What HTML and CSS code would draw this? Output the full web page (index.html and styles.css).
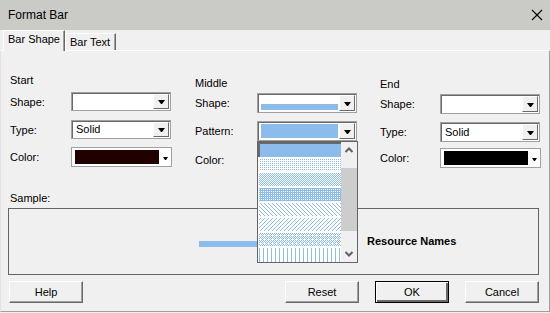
FILE: index.html
```html
<!DOCTYPE html>
<html>
<head>
<meta charset="utf-8">
<link rel="stylesheet" href="styles.css">
</head>
<body>
<div class="dialog">
  <div class="titlebar">
    <span class="title">Format Bar</span>
    <svg class="close" width="12" height="12" viewBox="0 0 12 12"><path d="M1 1 L11 11 M11 1 L1 11" stroke="#000" stroke-width="1.1" fill="none"/></svg>
  </div>
  <div class="tabs">
    <div class="tab active">Bar Shape</div>
    <div class="tab">Bar Text</div>
  </div>
  <div class="panel">
    <div class="groups">
      <div class="group g-start">
        <div class="heading">Start</div>
        <div class="row r1"><span class="lbl">Shape:</span><div class="combo"><div class="val"></div><div class="btn"><i class="arrow"></i></div></div></div>
        <div class="row r2"><span class="lbl">Type:</span><div class="combo"><div class="val">Solid</div><div class="btn"><i class="arrow"></i></div></div></div>
        <div class="row r3"><span class="lbl">Color:</span><div class="ccombo"><div class="swatch dark-red"></div><i class="sarrow"></i></div></div>
      </div>
      <div class="group g-mid">
        <div class="heading">Middle</div>
        <div class="row r1"><span class="lbl">Shape:</span><div class="combo"><div class="val shapeval"><div class="shapebar"></div></div><div class="btn"><i class="arrow"></i></div></div></div>
        <div class="row r2"><span class="lbl">Pattern:</span><div class="combo"><div class="val patval"><div class="patfill"></div></div><div class="btn"><i class="arrow"></i></div></div></div>
        <div class="row r3"><span class="lbl">Color:</span></div>
      </div>
      <div class="group g-end">
        <div class="heading">End</div>
        <div class="row r1"><span class="lbl">Shape:</span><div class="combo"><div class="val"></div><div class="btn"><i class="arrow"></i></div></div></div>
        <div class="row r2"><span class="lbl">Type:</span><div class="combo"><div class="val">Solid</div><div class="btn"><i class="arrow"></i></div></div></div>
        <div class="row r3"><span class="lbl">Color:</span><div class="ccombo"><div class="swatch black"></div><i class="sarrow"></i></div></div>
      </div>
    </div>
    <div class="sample-label">Sample:</div>
    <div class="sample">
      <div class="sbar"></div>
      <div class="resname">Resource Names</div>
    </div>
    <div class="buttons">
      <div class="button help">Help</div>
      <div class="spacer"></div>
      <div class="button">Reset</div>
      <div class="button default">OK</div>
      <div class="button">Cancel</div>
    </div>

    <div class="dropdown">
      <div class="items">
        <div class="item selected"></div>
        <svg class="patterns" width="83" height="105" viewBox="0 0 83 105" shape-rendering="crispEdges">
          <defs>
            <pattern id="p25" width="2" height="2" patternUnits="userSpaceOnUse"><rect x="0" y="0" width="1" height="1" fill="#8cbcec"/></pattern>
            <pattern id="p50" width="2" height="2" patternUnits="userSpaceOnUse"><rect x="0" y="0" width="1" height="1" fill="#8cbcec"/><rect x="1" y="1" width="1" height="1" fill="#8cbcec"/></pattern>
            <pattern id="p75" width="2" height="2" patternUnits="userSpaceOnUse"><rect x="0" y="0" width="2" height="2" fill="#8cbcec"/><rect x="1" y="0" width="1" height="1" fill="#fff"/></pattern>
            <pattern id="pback" width="4" height="4" patternUnits="userSpaceOnUse"><rect x="0" y="0" width="1" height="1" fill="#8cbcec"/><rect x="1" y="1" width="1" height="1" fill="#8cbcec"/><rect x="2" y="2" width="1" height="1" fill="#8cbcec"/><rect x="3" y="3" width="1" height="1" fill="#8cbcec"/></pattern>
            <pattern id="pfwd" width="4" height="4" patternUnits="userSpaceOnUse"><rect x="3" y="0" width="1" height="1" fill="#8cbcec"/><rect x="2" y="1" width="1" height="1" fill="#8cbcec"/><rect x="1" y="2" width="1" height="1" fill="#8cbcec"/><rect x="0" y="3" width="1" height="1" fill="#8cbcec"/></pattern>
            <pattern id="pcross" width="4" height="4" patternUnits="userSpaceOnUse"><rect x="0" y="0" width="1" height="1" fill="#8cbcec"/><rect x="2" y="0" width="1" height="1" fill="#8cbcec"/><rect x="1" y="1" width="1" height="1" fill="#8cbcec"/><rect x="3" y="1" width="1" height="1" fill="#8cbcec"/><rect x="0" y="2" width="1" height="1" fill="#8cbcec"/><rect x="3" y="3" width="1" height="1" fill="#8cbcec"/><rect x="1" y="3" width="1" height="1" fill="#8cbcec"/></pattern>
            <pattern id="pvert" width="4" height="4" patternUnits="userSpaceOnUse"><rect x="1" y="0" width="1" height="4" fill="#8cbcec"/></pattern>
          </defs>
          <rect x="1" y="1" width="82" height="13" fill="url(#p25)"/>
          <rect x="1" y="16" width="82" height="13" fill="url(#p50)"/>
          <rect x="1" y="31" width="82" height="13" fill="url(#p75)"/>
          <rect x="1" y="46" width="82" height="13" fill="url(#pback)"/>
          <rect x="1" y="61" width="82" height="13" fill="url(#pfwd)"/>
          <rect x="1" y="76" width="82" height="13" fill="url(#pcross)"/>
          <rect x="1" y="91" width="82" height="14" fill="url(#pvert)"/>
        </svg>
      </div>
      <div class="scrollbar">
        <svg class="chev" width="16" height="16" viewBox="0 0 16 16"><path d="M4.5 10 L8 6.5 L11.5 10" stroke="#606060" stroke-width="2" fill="none"/></svg>
        <div class="track"><div class="thumb"></div></div>
        <svg class="chev" width="16" height="16" viewBox="0 0 16 16"><path d="M4.5 6 L8 9.5 L11.5 6" stroke="#606060" stroke-width="2" fill="none"/></svg>
      </div>
    </div>
  </div>
</div>
</body>
</html>
```

FILE: styles.css
```css
html, body {
  margin: 0;
  padding: 0;
  background: #f0f0f0;
}
body {
  font-family: "Liberation Sans", Arial, sans-serif;
  font-size: 11px;
  color: #000;
}
.dialog {
  width: 550px;
  height: 313px;
  background: #f0f0f0;
  overflow: hidden;
}
.titlebar {
  height: 30px;
  background: #cacac6;
  display: flex;
  align-items: center;
  justify-content: space-between;
  padding: 0 7px 1px 8px;
  box-sizing: border-box;
}
.title {
  font-size: 12px;
  line-height: 14px;
}
.close {
  display: block;
  margin-right: 0;
}
.tabs {
  height: 20px;
  display: flex;
  align-items: flex-end;
  padding-left: 3px;
  position: relative;
  z-index: 2;
}
.tab {
  box-sizing: border-box;
  height: 17px;
  padding: 0 0 0 4px;
  line-height: 16px;
  border-top: 1px solid #fff;
  border-left: 1px solid #fff;
  border-right: 1px solid #696969;
  box-shadow: inset -1px 0 #a0a0a0;
  width: 51px;
  margin-bottom: 0;
}
.tab.active {
  width: 62px;
  height: 21px;
  margin-bottom: -1px;
  line-height: 17px;
  padding-bottom: 2px;
  background: #f0f0f0;
  border-right: 1px solid #696969;
}
.panel {
  position: relative;
  height: 262px;
  box-sizing: border-box;
  border-top: 1px solid #fff;
  border-left: 1px solid #e3e3e3;
  border-right: 1px solid #a0a0a0;
  border-bottom: 1px solid #a0a0a0;
}
.groups {
  height: 119px;
  display: flex;
  padding-left: 9px;
}
.group {
  width: 185px;
  flex: none;
}
.heading {
  line-height: 13px;
  height: 13px;
}
.row {
  display: flex;
  align-items: center;
  height: 19px;
}
.lbl {
  width: 61px;
  flex: none;
}
.g-start { padding-top: 23px; }
.g-start .r1 { margin-top: 5px; }
.g-start .r2 { margin-top: 9px; }
.g-start .r3 { margin-top: 8px; height: 20px; }

.g-mid { padding-top: 26px; }
.g-mid .lbl { width: 62px; }
.g-mid .r1 { margin-top: 3px; height: 20px; }
.g-mid .r2 { margin-top: 8px; height: 20px; }
.g-mid .r3 { margin-top: 9px; }

.g-end { padding-top: 27px; }
.g-end .lbl { width: 60px; }
.g-end .r1 { margin-top: 3px; height: 20px; }
.g-end .r2 { margin-top: 8px; height: 20px; }
.g-end .r3 { margin-top: 6px; height: 20px; }

.combo {
  width: 100px;
  height: 100%;
  box-sizing: border-box;
  border: 1px solid #a0a0a0;
  box-shadow: inset 1px 1px #696969;
  background: #fff;
  display: flex;
  padding: 1px 1px 1px 2px;
}
.val {
  flex: 1;
  display: flex;
  align-items: center;
  padding-left: 2px;
  line-height: 13px;
}
.shapeval {
  align-items: flex-end;
  padding: 0 1px 1px 1px;
}
.shapebar {
  height: 6px;
  width: 100%;
  background: #8cbcec;
}
.patval {
  padding: 1px 1px 1px 1px;
}
.patfill {
  width: 100%;
  height: 100%;
  background: #8cbcec;
}
.btn {
  width: 16px;
  flex: none;
  box-sizing: border-box;
  background: #f0f0f0;
  border-top: 1px solid #fff;
  border-left: 1px solid #fff;
  border-right: 1px solid #696969;
  border-bottom: 1px solid #696969;
  display: flex;
  align-items: center;
  justify-content: center;
}
.arrow {
  display: block;
  width: 1px;
  height: 0;
  border-left: 3px solid transparent;
  border-right: 3px solid transparent;
  border-top: 4px solid #000;
  margin-top: 1px;
}
.ccombo {
  width: 101px;
  height: 100%;
  box-sizing: border-box;
  border: 1px solid #a0a0a0;
  background: #fff;
  display: flex;
  align-items: center;
  padding: 2px 3px 2px 3px;
}
.swatch {
  width: 86px;
  height: 100%;
}
.swatch.dark-red { background: #200000; }
.swatch.black { background: #000; }
.sarrow {
  display: block;
  width: 1px;
  height: 0;
  border-left: 2px solid transparent;
  border-right: 2px solid transparent;
  border-top: 3px solid #000;
  margin-left: 4px;
  margin-top: 2px;
}
.sample-label {
  margin: 22px 0 0 9px;
  line-height: 13px;
  height: 13px;
}
.sample {
  margin: 3px 0 0 7px;
  width: 531px;
  height: 67px;
  box-sizing: border-box;
  border: 1px solid #646464;
  display: flex;
  align-items: center;
  padding-left: 190px;
}
.sbar {
  width: 150px;
  height: 6px;
  background: #8cbcec;
  margin-top: 5px;
  margin-right: 18px;
}
.resname {
  font-weight: bold;
  line-height: 13px;
}
.buttons {
  display: flex;
  margin: 6px 0 0 8px;
  width: 530px;
  gap: 16px;
}
.spacer {
  flex: 1;
}
.button {
  width: 74px;
  height: 22px;
  box-sizing: border-box;
  border-top: 1px solid #fff;
  border-left: 1px solid #fff;
  border-right: 1px solid #696969;
  border-bottom: 1px solid #696969;
  box-shadow: inset -1px -1px #a0a0a0;
  background: #f0f0f0;
  display: flex;
  align-items: center;
  justify-content: center;
  line-height: 13px;
  padding-top: 1px;
}
.button.default {
  border: 1px solid #000;
  box-shadow: inset 1px 1px #fff, inset -2px -2px #696969;
}
.dropdown {
  position: absolute;
  left: 256px;
  top: 90px;
  width: 101px;
  height: 122px;
  box-sizing: border-box;
  border: 1px solid #646464;
  background: #fff;
  display: flex;
  z-index: 5;
}
.items {
  width: 83px;
  display: flex;
  flex-direction: column;
}
.item.selected {
  height: 15px;
  box-sizing: border-box;
  background: #8cbcec;
  border-top: 2px solid #696969;
  border-left: 2px solid #696969;
}
.patterns {
  display: block;
}
.scrollbar {
  width: 16px;
  display: flex;
  flex-direction: column;
  background: #f0f0f0;
}
.chev {
  display: block;
  flex: none;
}
.track {
  flex: 1;
  padding-top: 10px;
  padding-bottom: 15px;
}
.thumb {
  height: 100%;
  background: #cdcdcd;
}
```
